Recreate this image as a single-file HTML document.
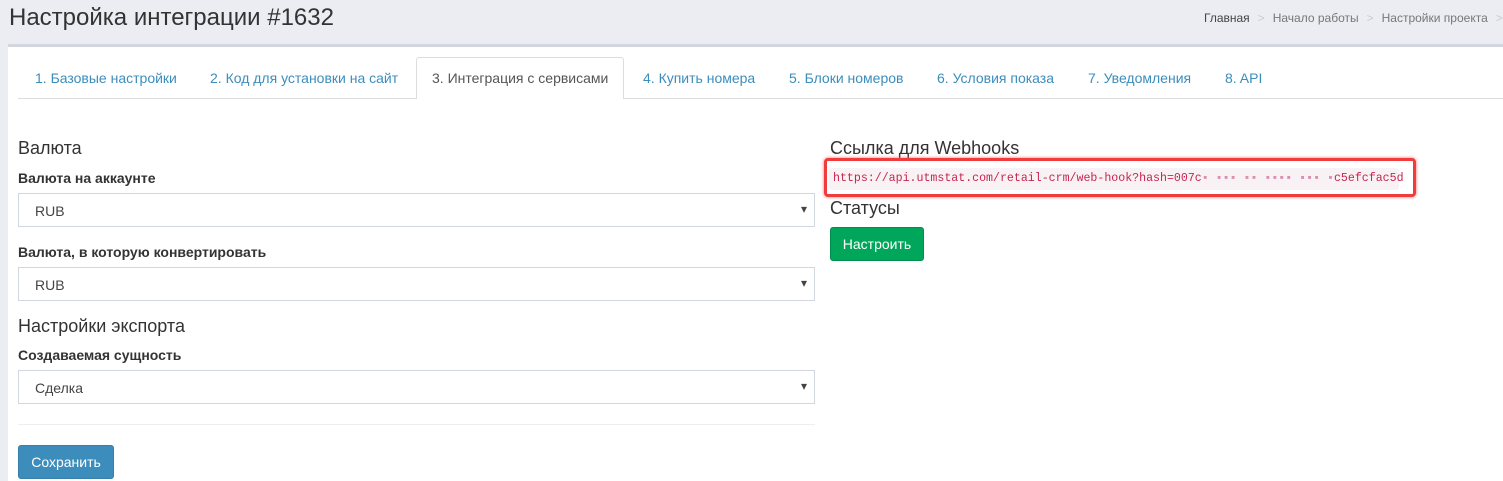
<!DOCTYPE html>
<html><head><meta charset="utf-8"><style>
*{box-sizing:border-box;margin:0;padding:0}
body{width:1503px;height:481px;overflow:hidden;background:#ebedf2;font-family:"Liberation Sans",sans-serif;color:#333;position:relative}
.abs{position:absolute;white-space:nowrap}
h1{position:absolute;left:9px;top:4px;font-size:24px;font-weight:normal;color:#333}
.bc{position:absolute;top:11px;left:1204px;font-size:12px;color:#777;white-space:nowrap}
.bc b{font-weight:normal;color:#444}
.bc i{font-style:normal;color:#ccc;margin:0 8px}
.panel{position:absolute;left:8px;top:44px;right:0;bottom:0;background:#fff;border-top:3px solid #d2d6de}
.tabline{position:absolute;left:18px;right:0;top:98px;height:1px;background:#ddd}
.tab{position:absolute;top:70px;font-size:14px;color:#3c8dbc}
.active{position:absolute;left:416px;top:57px;width:208px;height:42px;background:#fff;border:1px solid #ddd;border-bottom:none;border-radius:3px 3px 0 0}
.h3{font-size:18px;color:#333}
.lbl{font-size:14px;font-weight:bold}
.sel{position:absolute;left:18px;width:797px;height:34px;border:1px solid #d2d6de;font-size:14px;padding:9px 16px;color:#444}
.sel:after{content:"▾";position:absolute;right:7px;top:8px;font-size:12px;color:#444}
.btn{position:absolute;color:#fff;font-size:14px;border-radius:3px;text-align:center}
</style></head><body>
<h1>Настройка интеграции #1632</h1>
<div class="bc"><b>Главная</b><i>&gt;</i>Начало работы<i>&gt;</i>Настройки проекта<i>&gt;</i></div>
<div class="panel"></div>
<div class="tabline"></div>
<div class="active"></div>
<div class="tab abs" style="left:35px">1. Базовые настройки</div>
<div class="tab abs" style="left:210px">2. Код для установки на сайт</div>
<div class="tab abs" style="left:432px;color:#555">3. Интеграция с сервисами</div>
<div class="tab abs" style="left:643px">4. Купить номера</div>
<div class="tab abs" style="left:789px">5. Блоки номеров</div>
<div class="tab abs" style="left:937px">6. Условия показа</div>
<div class="tab abs" style="left:1088px">7. Уведомления</div>
<div class="tab abs" style="left:1225px">8. API</div>

<div class="abs h3" style="left:18px;top:138px">Валюта</div>
<div class="abs lbl" style="left:18px;top:170px">Валюта на аккаунте</div>
<div class="sel" style="top:193px">RUB</div>
<div class="abs lbl" style="left:18px;top:244px">Валюта, в которую конвертировать</div>
<div class="sel" style="top:267px">RUB</div>
<div class="abs h3" style="left:18px;top:316px">Настройки экспорта</div>
<div class="abs lbl" style="left:18px;top:347px">Создаваемая сущность</div>
<div class="sel" style="top:370px">Сделка</div>
<div class="abs" style="left:18px;top:424px;width:797px;height:1px;background:#eee"></div>
<div class="btn" style="left:18px;top:445px;width:96px;height:34px;background:#3c8dbc;border:1px solid #367fa9;line-height:32px">Сохранить</div>

<div class="abs h3" style="left:830px;top:138px">Ссылка для Webhooks</div>
<div class="abs" style="left:824px;top:158px;width:592px;height:39px;border:3px solid #f03c3c;border-radius:4px;box-shadow:0 0 3px #f66"></div>
<div class="abs" style="left:829px;top:168px;width:570px;height:22px;background:#f9f2f4;border-radius:3px;font-family:'Liberation Mono',monospace;font-size:11.6px;color:#c7254e;padding:4px 4px">https://api.utmstat.com/retail-crm/web-hook?hash=007c<span style="color:#d98fb0">▪ ▪▪▪  ▪▪ ▪▪▪▪  ▪▪▪ ▪</span>c5efcfac5d</div>
<div class="abs h3" style="left:830px;top:198px">Статусы</div>
<div class="btn" style="left:830px;top:227px;width:94px;height:34px;background:#00a65a;border:1px solid #008d4c;line-height:32px">Настроить</div>
</body></html>
